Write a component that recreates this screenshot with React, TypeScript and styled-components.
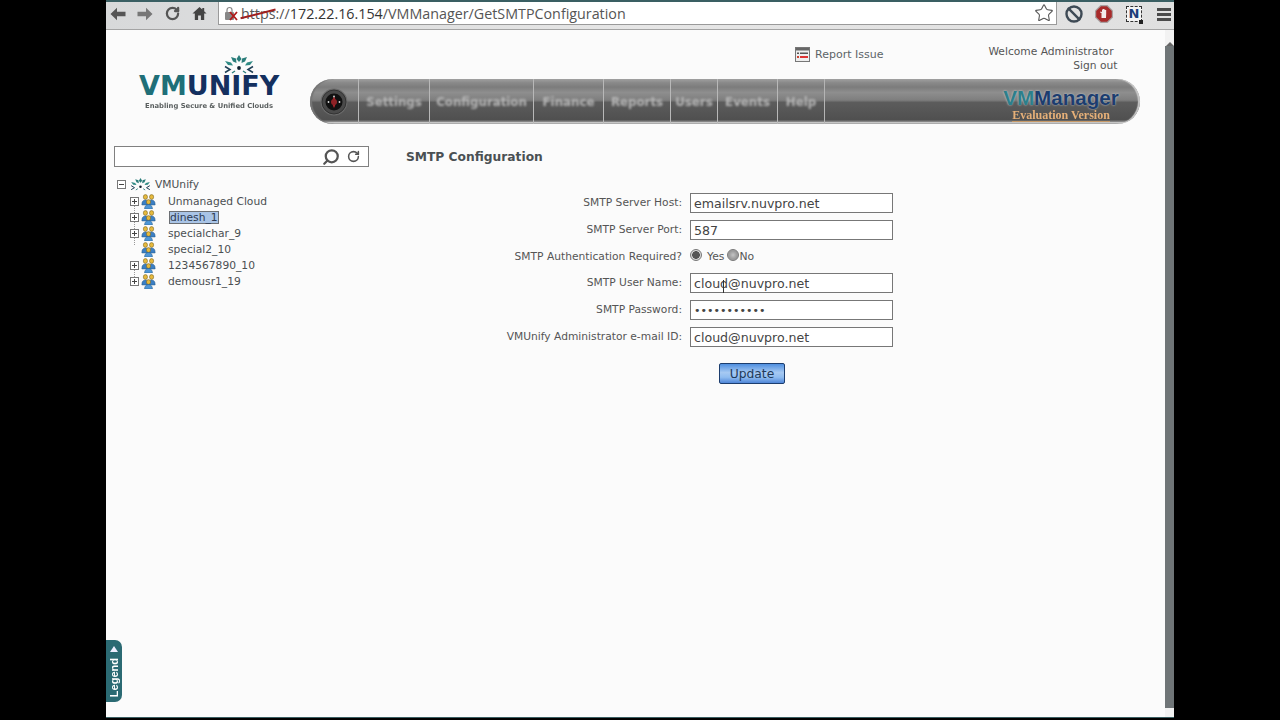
import React from "react";
import styled, { createGlobalStyle } from "styled-components";
import { RotateCw, Star, Ban, Search } from "lucide-react";

const Global = createGlobalStyle`
  html, body { margin: 0; padding: 0; background: #000; }
  #root { width: 1280px; height: 720px; overflow: hidden; }
  * { box-sizing: border-box; }
`;
const Screen = styled.div`
  width: 1280px; height: 720px; background: #000; display: flex; justify-content: center; align-items: flex-start;
`;
const Browser = styled.div`
  width: 1068px; height: 718px; display: flex; flex-direction: column; background: #fbfbfb; position: relative; border-bottom: 1px solid #3a5f63;
`;
const Toolbar = styled.div`
  height: 30px; flex: none; display: flex; align-items: flex-start;
  background: linear-gradient(90deg, #d8d9da 0, #e6e6e6 50%, #e0e0e0 100%);
  border-top: 2px solid #3a5f63; border-bottom: 1px solid #a4a4a4;
`;
const NavIcons = styled.div`
  width: 112px; flex: none; height: 23px; display: flex; align-items: center; gap: 7px; padding-left: 2px;
`;
const NavSlot = styled.div`
  width: 20px; display: flex; justify-content: center; align-items: center; flex: none; color: #555;
`;
const Omnibox = styled.div`
  width: 839px; height: 23px; flex: none; background: #fff; border: 1px solid #9a9a9a; border-top: none; display: flex; align-items: center;
  padding: 0 1px 0 5px; font: 14.3px "Open Sans", sans-serif; color: #555; white-space: nowrap;
`;
const Scheme = styled.span`
  color: #555; position: relative; display: inline-block;
  &::after { content: ""; position: absolute; left: -1px; right: 0; top: 9px; height: 1.5px; background: #a02020; transform: rotate(-14deg); }
`;
const Host = styled.span` color: #333; `;
const LockIcon = styled.svg` margin-right: 2px; flex: none; `;
const StarWrap = styled.div` margin-left: auto; color: #555; display: flex; margin-right: 1px; `;
const Extensions = styled.div`
  flex: 1; height: 24px; display: flex; align-items: center; gap: 12px; padding-left: 8px;
`;
const HandIcon = styled.svg` flex: none; `;
const NBadge = styled.div`
  width: 16px; height: 16px; flex: none; margin-left: 1px; border: 1px dashed #333; background: #f4f4f4; color: #1c3d7a; font: bold 13px/14px "DejaVu Sans", sans-serif; text-align: center; position: relative;
  &::after { content: ""; position: absolute; right: -2px; bottom: -3px; width: 4px; height: 4px; background: #222; }
`;
const Hamburger = styled.div`
  width: 14px; height: 13px; flex: none; margin-left: 3px; display: flex; flex-direction: column; justify-content: space-between;
  i { display: block; height: 3px; background: #4a4a4a; }
`;
const Viewport = styled.div` flex: 1; display: flex; min-height: 0; `;
const Page = styled.div` flex: 1; display: flex; flex-direction: column; min-width: 0; font-family: "DejaVu Sans", Verdana, sans-serif; `;
const Scrollbar = styled.div`
  width: 9px; background: #f2f2f2; display: flex; flex-direction: column; align-items: center; padding-bottom: 9px;
`;
const ScrollArrow = styled.div`
  margin-top: 6px; height: 10px; flex: none; width: 0; border-left: 4px solid transparent; border-right: 4px solid transparent; border-bottom: 4px solid #666;
`;
const ScrollThumb = styled.div` flex: 1; width: 9px; background: #6f7577; `;

const Header = styled.div` display: flex; height: 103px; flex: none; `;
const LogoCol = styled.div`
  width: 204px; padding: 25px 0 0 33px; display: flex; flex-direction: column;
`;
const EmblemSlot = styled.div` margin-left: 83px; height: 21px; `;
const Wordmark = styled.div`
  font: bold 27px/22px "DejaVu Sans", Arial, sans-serif; color: #14305f; margin-top: -1px; white-space: nowrap;
  span { color: #1f6f78; }
`;
const Tagline = styled.div`
  font: bold 6.8px/10px "DejaVu Sans", sans-serif; color: #5a5f5f; margin: 4px 0 0 6px; white-space: nowrap; filter: blur(0.3px);
`;
const HeaderMain = styled.div` flex: 1; display: flex; flex-direction: column; `;
const TopLinks = styled.div`
  height: 49px; flex: none; display: flex; font-size: 10.7px; color: #555; padding: 16px 0 0 485px;
`;
const Report = styled.div` display: flex; align-items: center; gap: 5px; height: 16px; color: #5d6468; font-size: 11px; `;
const Welcome = styled.div` margin-left: 105px; text-align: right; width: 129px; line-height: 13px; margin-top: -1px; color: #555; white-space: nowrap; flex: none; `;
const WelcomeLine = styled.div` padding-right: 4px; `;
const SignOut = styled.div` margin-top: 1px; `;
const NavBar = styled.div`
  width: 830px; height: 45px; border-radius: 23px; display: flex; align-items: stretch; overflow: hidden;
  background: linear-gradient(#a0a0a0 0, #8a8a8a 8%, #7c7c7c 18%, #8e8e8e 30%, #7e7e7e 47%, #5c5c5c 52%, #505050 90%, #777 94%, #d0d0d0 97%, #9a9a9a 100%);
  box-shadow: inset -2px 0 1px #c8c8c8, inset 2px 0 1px #777;
`;
const Knob = styled.div` width: 48px; flex: none; display: flex; align-items: center; justify-content: center; `;
const NavItem = styled.div<{ $w: number }>`
  width: ${p => p.$w}px; flex: none; display: flex; align-items: center; justify-content: center; border-left: 1px solid #b8b8b8;
`;
const NavText = styled.span`
  color: #b6b6b6; font: bold 11.8px "DejaVu Sans", sans-serif; filter: blur(1px); white-space: nowrap;
`;
const NavEnd = styled.div` width: 1px; flex: none; background: #b4b4b4; `;
const Brand = styled.div`
  margin-left: auto; width: 138px; flex: none; display: flex; flex-direction: column; align-items: center; padding: 8px 0 0 0; margin-right: 10px;
`;
const BrandName = styled.div`
  font: bold 20.6px/22px "Liberation Sans", sans-serif; color: #1c3d6e; white-space: nowrap; text-shadow: 0 0 2px #cfd6da;
  span { color: #2c7f8a; }
`;
const BrandSub = styled.div`
  font: bold 12px/11px "Liberation Serif", serif; color: #e6b078; border-bottom: 1px solid #c89a68; margin-top: 1px; white-space: nowrap; filter: blur(0.5px);
`;

const Body = styled.div` flex: 1; display: flex; min-height: 0; `;
const Sidebar = styled.div` width: 300px; flex: none; padding: 13px 0 0 8px; `;
const SearchBox = styled.div`
  width: 255px; height: 21px; background: #fff; border: 1px solid #808080; display: flex; align-items: center; justify-content: flex-end; gap: 7px; padding-right: 8px; color: #555;
`;
const Tree = styled.div` margin-top: 9px; font-size: 10.7px; color: #4a4f52; `;
const RootRow = styled.div` display: flex; align-items: center; height: 17px; padding-left: 3px; gap: 3px; `;
const TreeRow = styled.div<{ $line?: boolean }>`
  display: flex; align-items: center; height: 16px; padding-left: 16px; position: relative;
  ${p => p.$line ? `&::before { content: ""; position: absolute; left: 20px; top: 12px; height: 8px; border-left: 1px dotted #999; }` : ""}
`;
const Exp = styled.div<{ $hidden?: boolean }>`
  width: 9px; height: 9px; flex: none; border: 1px solid #777; background: #fff; position: relative; z-index: 1; visibility: ${p => p.$hidden ? "hidden" : "visible"};
  &::before { content: ""; position: absolute; left: 1px; right: 1px; top: 3px; height: 1px; background: #444; }
`;
const Plus = styled(Exp)`
  &::after { content: ""; position: absolute; top: 1px; bottom: 1px; left: 3px; width: 1px; background: #444; }
`;
const GroupIcon = styled.svg` margin-left: 2px; flex: none; `;
const TreeLabel = styled.span<{ $sel?: boolean }>`
  margin-left: 11px; padding: 0 1px; white-space: nowrap;
  ${p => p.$sel ? "background: #a9c4e6; border: 1px solid #6b6f74; color: #2c3a52; line-height: 11px; margin-left: 13px; padding: 0;" : ""}
`;
const Content = styled.div` flex: 1; padding: 16px 0 0 0; `;
const Title = styled.div` font: bold 12.25px/16px "DejaVu Sans", sans-serif; color: #4a5053; `;
const Form = styled.div`
  margin-top: 28px; display: grid; grid-template-columns: 276px 203px; column-gap: 8px; row-gap: 7px; font-size: 10.7px; color: #555;
`;
const Label = styled.div` text-align: right; line-height: 19px; white-space: nowrap; `;
const Input = styled.div`
  height: 20px; border: 1px solid #777; background: #fff; font-size: 12.6px; line-height: 19px; padding-left: 3px; color: #444; white-space: nowrap; position: relative;
`;
const PasswordInput = styled(Input)` font-size: 11px; `;
const RadioRow = styled.div` display: flex; align-items: center; height: 19px; font-size: 10.8px; color: #555; `;
const Radio = styled.span<{ $on?: boolean }>`
  width: 12px; height: 12px; border-radius: 50%; border: 1px solid #777; display: inline-block; margin-top: -4px;
  background: ${p => p.$on ? "radial-gradient(#555 0, #555 50%, #d8d8d8 58%)" : "radial-gradient(#c4c4c4 0, #999 60%, #ccc 100%)"};
`;
const Yes = styled.span` margin: 0 3px 0 5px; `;
const Caret = styled.span`
  position: absolute; left: 30px; top: 6px; width: 5px; height: 13px;
  &::before { content: ""; position: absolute; left: 2px; top: 0; bottom: 0; width: 1px; background: #333; }
`;
const ButtonRow = styled.div` grid-column: 2; display: flex; padding-left: 29px; margin-top: 9px; `;
const UpdateButton = styled.button`
  width: 66px; height: 21px; padding: 0; border: 1px solid #1c3d6e; border-radius: 2px; font: 12.3px "DejaVu Sans", sans-serif; color: #1f3a5a;
  background: linear-gradient(#4f8fe0 0, #a6c9f2 45%, #8fbcf0 70%, #4f86d8 100%);
`;
const Legend = styled.div`
  position: absolute; left: 0; top: 640px; width: 16px; height: 62px; background: #2b6a73; border-radius: 0 7px 7px 0; color: #fff;
  font: bold 11px "Liberation Sans", sans-serif; display: flex; flex-direction: column; align-items: center; padding-top: 6px; gap: 6px;
`;
const LegendArrow = styled.i` width: 0; height: 0; border-bottom: 6px solid #eef; border-left: 4px solid transparent; border-right: 4px solid transparent; `;
const LegendText = styled.span` writing-mode: vertical-rl; transform: rotate(180deg); `;

const Group = () => (
  <GroupIcon width="15" height="15" viewBox="0 0 17 15" preserveAspectRatio="none">
    <circle cx="5" cy="3" r="2.4" fill="#e6b93c" stroke="#7a6420" strokeWidth=".6" />
    <circle cx="12" cy="3" r="2.4" fill="#e6b93c" stroke="#7a6420" strokeWidth=".6" />
    <path d="M1 10c0-3 2-4 4-4s3 1 3.500 2.500C9 7 10 6 12 6s4 1 4 4v1H1z" fill="#3b7fc4" stroke="#24557f" strokeWidth=".5" />
    <circle cx="8.500" cy="8" r="2.400" fill="#e6b93c" stroke="#7a6420" strokeWidth=".6" />
    <path d="M4 15c0-3 2-4.500 4.500-4.500S13 12 13 15z" fill="#4d96d8" stroke="#24557f" strokeWidth=".5" />
  </GroupIcon>
);

const EmblemMark = ({ w = 34, h = 21 }: { w?: number; h?: number }) => (
  <svg width={w} height={h} viewBox="0 0 34 21" style={{ display: "block", flex: "none" }}>
    <circle cx="17" cy="13" r="1.900" fill="#10202f" />
    <path d="M17 0l2.500 4-2.500 3-2.500-3z" fill="#2a7d7a" />
    <path d="M9 2l5 1.500 .5 4.500-3.500-1.500z" fill="#2a7d7a" />
    <path d="M25 2l-5 1.500-.5 4.500 3.500-1.500z" fill="#2a7d7a" />
    <path d="M3 6l6 1.500 2 3-5-.5z" fill="#2f8a84" />
    <path d="M31 6l-6 1.500-2 3 5-.5z" fill="#2f8a84" />
    <g fill="none" stroke="#1f3f55" strokeWidth="1.500">
      <path d="M3 11.500l5 3-5 3" /><path d="M31 11.500l-5 3 5 3" />
    </g>
    <g fill="none" stroke="#2a7d7a" strokeWidth="1.300">
      <path d="M10 18l3-2" /><path d="M24 18l-3-2" />
    </g>
  </svg>
);

const items: [string, number][] = [["Settings", 71], ["Configuration", 104], ["Finance", 70], ["Reports", 67], ["Users", 47], ["Events", 60], ["Help", 47]];
const tree: { name: string; leaf?: boolean; sel?: boolean; line?: boolean }[] = [
  { name: "Unmanaged Cloud", line: true }, { name: "dinesh_1", sel: true, line: true }, { name: "specialchar_9", line: true },
  { name: "special2_10", leaf: true }, { name: "1234567890_10", line: true }, { name: "demousr1_19" },
];

export default function App() {
  return (
    <Screen>
      <Global />
      <Browser>
        <Toolbar>
          <NavIcons>
            <NavSlot><svg width="16" height="14" viewBox="0 0 16 14"><path d="M0.500 7L7 .800V4.800h8.500v4.400H7v4z" fill="#555" /></svg></NavSlot>
            <NavSlot><svg width="16" height="14" viewBox="0 0 16 14"><path d="M15.500 7L9 .800V4.800H.500v4.400H9v4z" fill="#777" /></svg></NavSlot>
            <NavSlot><RotateCw size={15} strokeWidth={3.600} /></NavSlot>
            <NavSlot><svg width="15" height="15" viewBox="0 0 16 16"><path d="M8 1L0.500 8h2.500v7h3.500v-5h3v5H13V8h2.500L13 5.600V2h-2v1.700z" fill="#444" /></svg></NavSlot>
          </NavIcons>
          <Omnibox>
            <LockIcon width="15" height="15" viewBox="0 0 15 15">
              <rect x="1" y="6" width="9" height="8" rx="1" fill="#888" />
              <path d="M3 6V4a2.500 2.500 0 015 0v2" fill="none" stroke="#888" strokeWidth="1.200" />
              <path d="M6 6l7 8M13 6l-7 8" stroke="#b01818" strokeWidth="1.800" />
            </LockIcon>
            <span><Scheme>https</Scheme>://<Host>172.22.16.154</Host>/VMManager/GetSMTPConfiguration</span>
            <StarWrap><Star size={20} strokeWidth={1.300} /></StarWrap>
          </Omnibox>
          <Extensions>
            <Ban size={18} color="#3e4a55" strokeWidth={3.200} />
            <HandIcon width="18" height="18" viewBox="0 0 18 18">
              <path d="M5.500 0h7L18 5.500v7L12.500 18h-7L0 12.500v-7z" fill="#a8a0a0" />
              <path d="M6 1.200h6L16.800 6v6L12 16.800H6L1.200 12V6z" fill="#a82a2a" />
              <path d="M6.500 13V8L5 7.500l.5-1 1.500.5V4.500h1V4h1.200v.5h1V5h1v3.500L11 13z" fill="#f4eaea" />
            </HandIcon>
            <NBadge>N</NBadge>
            <Hamburger><i /><i /><i /></Hamburger>
          </Extensions>
        </Toolbar>
        <Viewport>
          <Page>
            <Header>
              <LogoCol>
                <EmblemSlot><EmblemMark /></EmblemSlot>
                <Wordmark><span>VM</span>UNIFY</Wordmark>
                <Tagline>Enabling Secure &amp; Unified Clouds</Tagline>
              </LogoCol>
              <HeaderMain>
                <TopLinks>
                  <Report>
                    <svg width="15" height="15" viewBox="0 0 15 15"><rect x=".5" y=".5" width="14" height="14" fill="#eee" stroke="#777" /><rect x="1" y="1" width="13" height="2.500" fill="#666" /><rect x="2" y="5.500" width="2" height="1.500" fill="#555" /><rect x="5" y="5.500" width="8" height="1.500" fill="#555" /><rect x="2" y="9" width="2" height="2" fill="#c43" /><rect x="5" y="9" width="8" height="2" fill="#d33" /></svg>
                    Report Issue
                  </Report>
                  <Welcome><WelcomeLine>Welcome Administrator</WelcomeLine><SignOut>Sign out</SignOut></Welcome>
                </TopLinks>
                <NavBar>
                  <Knob>
                    <svg width="28" height="28" viewBox="0 0 28 28">
                      <circle cx="14" cy="14" r="13.500" fill="#6a6a6a" />
                      <circle cx="14" cy="14" r="12" fill="#4a4a4a" stroke="#333" />
                      <circle cx="14" cy="14" r="8.500" fill="#111" />
                      <path d="M14 8.500c2 2 2 9 0 11.500-2-2.500-2-9.500 0-11.500z" fill="#a3262a" />
                      <circle cx="14" cy="14" r="3" fill="#8e2226" />
                      <circle cx="14" cy="8.500" r=".9" fill="#ddd" /><circle cx="8.500" cy="14" r=".9" fill="#ddd" /><circle cx="19.500" cy="14" r=".9" fill="#ddd" />
                    </svg>
                  </Knob>
                  {items.map(([n, w]) => <NavItem key={n} $w={w}><NavText>{n}</NavText></NavItem>)}
                  <NavEnd />
                  <Brand>
                    <BrandName><span>VM</span>Manager</BrandName>
                    <BrandSub>Evaluation Version</BrandSub>
                  </Brand>
                </NavBar>
              </HeaderMain>
            </Header>
            <Body>
              <Sidebar>
                <SearchBox>
                  <Search size={18} strokeWidth={3} style={{ transform: "scaleX(-1)" }} />
                  <RotateCw size={13} strokeWidth={2.800} />
                </SearchBox>
                <Tree>
                  <RootRow><Exp /><EmblemMark w={23} h={14} />VMUnify</RootRow>
                  {tree.map(t => (
                    <TreeRow key={t.name} $line={t.line}>
                      <Plus $hidden={t.leaf} />
                      <Group />
                      <TreeLabel $sel={t.sel}>{t.name}</TreeLabel>
                    </TreeRow>
                  ))}
                </Tree>
              </Sidebar>
              <Content>
                <Title>SMTP Configuration</Title>
                <Form>
                  <Label>SMTP Server Host:</Label><Input>emailsrv.nuvpro.net</Input>
                  <Label>SMTP Server Port:</Label><Input>587</Input>
                  <Label>SMTP Authentication Required?</Label>
                  <RadioRow><Radio $on /><Yes>Yes</Yes><Radio />No</RadioRow>
                  <Label>SMTP User Name:</Label><Input>cloud@nuvpro.net<Caret /></Input>
                  <Label>SMTP Password:</Label><PasswordInput>•••••••••••</PasswordInput>
                  <Label>VMUnify Administrator e-mail ID:</Label><Input>cloud@nuvpro.net</Input>
                  <ButtonRow><UpdateButton>Update</UpdateButton></ButtonRow>
                </Form>
              </Content>
            </Body>
          </Page>
          <Scrollbar><ScrollArrow /><ScrollThumb /></Scrollbar>
        </Viewport>
        <Legend><LegendArrow /><LegendText>Legend</LegendText></Legend>
      </Browser>
    </Screen>
  );
}
